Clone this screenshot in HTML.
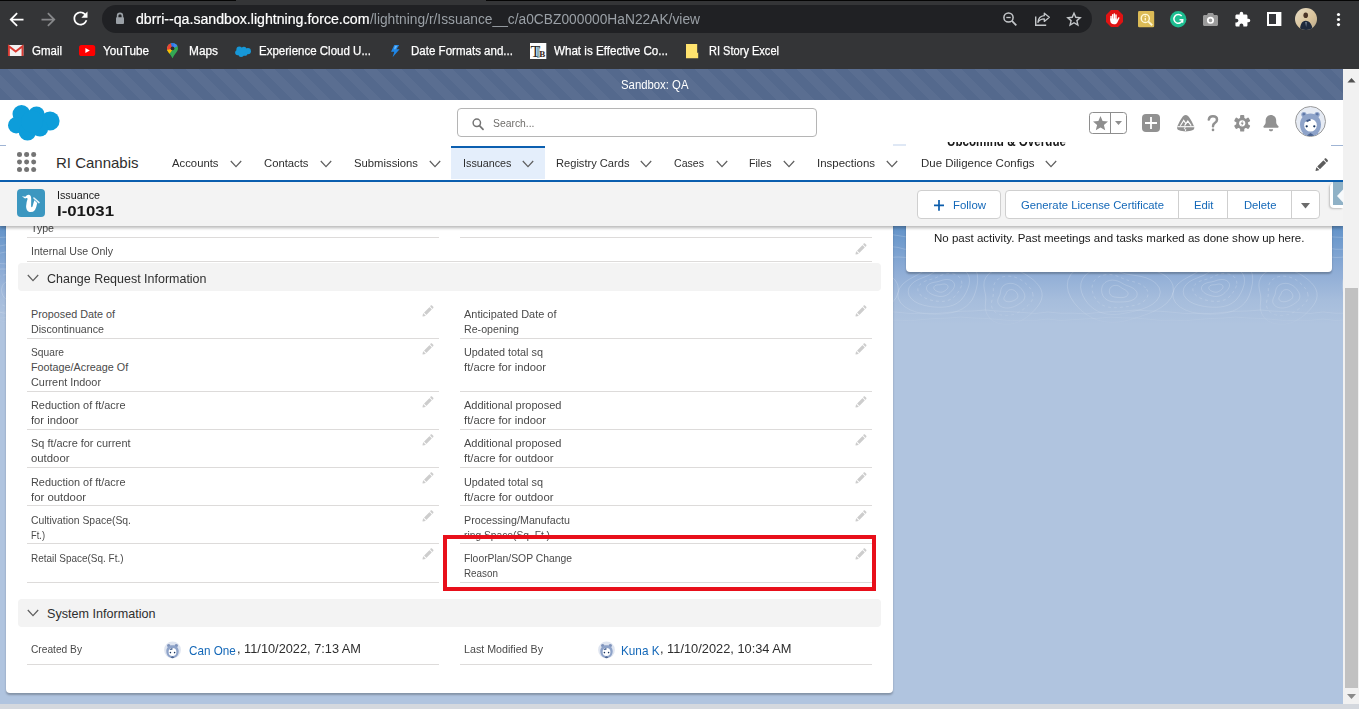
<!DOCTYPE html>
<html lang="en">
<head>
<meta charset="utf-8">
<title>I-01031 | Issuance | Salesforce</title>
<style>
html,body{margin:0;padding:0;}
body{width:1359px;height:709px;overflow:hidden;position:relative;background:#b0c4df;font-family:"Liberation Sans",sans-serif;}
.a{position:absolute;}
.t{position:absolute;white-space:pre;transform-origin:0 50%;font-family:"Liberation Sans",sans-serif;}
svg{position:absolute;overflow:visible;}
/* browser chrome */
#chrome{left:0;top:0;width:1359px;height:69px;background:#343537;}
#tabstrip{left:0;top:0;width:1359px;height:1px;background:#050505;}
#tabgap{left:236px;top:0;width:250px;height:1px;background:#343537;}
#omni{left:102px;top:5px;width:990px;height:28px;border-radius:14px;background:#202124;}
/* page */
#banner{left:0;top:69px;width:1343px;height:31px;background:#54698d;background-image:repeating-linear-gradient(45deg,rgba(255,255,255,0) 0,rgba(255,255,255,0) 9px,rgba(255,255,255,.035) 9px,rgba(255,255,255,.035) 18px);}
#ghead{left:0;top:100px;width:1343px;height:46px;background:#fff;}
#nav{left:0;top:146px;width:1343px;height:34px;background:#fff;}
#navline{left:0;top:180px;width:1343px;height:2px;background:#0b5fb0;}
#tabsel{left:451px;top:146px;width:94px;height:33px;background:#e4eefb;}
#tabtop{left:451px;top:146px;width:94px;height:2px;background:#0b5fb0;}
#search{left:457px;top:108px;width:360px;height:29px;box-sizing:border-box;border:1px solid #b5b5b5;border-radius:4px;background:#fff;}
#bgtop{left:0;top:182px;width:1343px;height:160px;background:linear-gradient(#5f8fc6 0,#6293c9 44px,#8fadd6 90px,#a6bddc 118px,#b0c4df 142px);}
#rechead{left:0;top:182px;width:1343px;height:44px;background:#f3f3f3;box-shadow:0 2px 3px rgba(0,0,0,.28);}
#recicon{left:17px;top:189px;width:28px;height:28px;border-radius:4px;background:#3c97c0;}
#lcard{left:6px;top:200px;width:887px;height:493px;background:#fff;border-radius:0 0 4px 4px;box-shadow:0 2px 2px rgba(0,0,0,.25);}
#rcard{left:906px;top:200px;width:426px;height:72px;background:#fff;border-radius:0 0 4px 4px;box-shadow:0 2px 2px rgba(0,0,0,.25);}
.sec{left:18px;width:863px;height:28px;background:#f3f3f3;border-radius:4px;}
.ln{height:1px;background:#dddbda;}
.btn{box-sizing:border-box;border:1px solid #cfcfcf;background:#fff;border-radius:4px;}
.dv{width:1px;background:#cfcfcf;top:191px;height:27px;}
#redbox{left:443px;top:535px;width:433px;height:56px;box-sizing:border-box;border:4px solid #e80f1a;}
/* scrollbar */
#sbar{left:1343px;top:69px;width:16px;height:635px;background:#f1f1f1;}
#sthumb{left:1345px;top:288px;width:13px;height:400px;background:#c1c1c1;}
#hbar{left:0;top:704px;width:1359px;height:5px;background:#d4d8de;}
#sidetab{left:1330px;top:183px;width:13px;height:25px;background:#fff;border-radius:4px 0 0 4px;box-shadow:-1px 1px 2px rgba(0,0,0,.22);}
#sidetab2{left:1333.300px;top:182px;width:9.700px;height:23.200px;background:#8fb1c6;}
.glitchwrap{left:900px;top:141.500px;width:180px;height:4.300px;overflow:hidden;}
.hide{left:0;top:226px;}
</style>
</head>
<body>
<!-- ===== page background ===== -->
<div class="a" id="bgtop"></div>
<svg class="a" style="left:0;top:226px" width="1343" height="100" viewBox="0 0 1343 100"><defs><pattern id="topo" width="275" height="130" patternUnits="userSpaceOnUse" x="-52" y="0"><path d="M78.8 65.1Q79.8 66.0 80.1 67.2Q80.3 68.4 79.4 69.5Q78.6 70.5 77.1 71.0Q75.6 71.5 74.1 71.6Q72.5 71.6 71.3 71.5Q70.0 71.4 68.8 71.3Q67.7 71.2 66.4 71.0Q65.2 70.7 64.2 70.2Q63.1 69.6 62.4 68.8Q61.8 67.9 61.5 67.0Q61.3 66.0 61.3 65.0Q61.4 64.0 61.8 62.9Q62.2 61.9 63.1 61.0Q64.1 60.1 65.5 59.7Q66.9 59.2 68.5 59.4Q70.0 59.6 71.2 60.2Q72.3 60.9 73.1 61.5Q73.9 62.1 74.7 62.6Q75.6 63.1 76.7 63.6Q77.8 64.2 78.8 65.1ZM87.5 64.2Q89.3 66.0 89.2 68.2Q89.2 70.5 87.3 72.3Q85.3 74.0 82.5 74.8Q79.7 75.7 77.1 75.8Q74.5 76.0 72.3 76.0Q70.0 76.0 67.8 76.0Q65.5 75.9 63.2 75.5Q60.9 75.0 59.0 73.9Q57.1 72.7 55.9 71.2Q54.7 69.6 54.2 67.8Q53.6 66.0 53.6 64.1Q53.6 62.2 54.3 60.2Q55.1 58.2 57.0 56.6Q58.9 55.0 61.7 54.4Q64.5 53.8 67.3 54.4Q70.0 54.9 72.0 56.0Q74.0 57.1 75.6 58.0Q77.2 58.9 79.1 59.6Q81.0 60.2 83.4 61.3Q85.8 62.3 87.5 64.2ZM111.1 61.5Q113.4 66.0 111.3 70.6Q109.3 75.2 104.4 78.3Q99.5 81.4 94.2 83.1Q88.9 84.7 84.1 85.7Q79.4 86.8 74.7 87.6Q70.0 88.5 64.9 88.5Q59.8 88.5 54.9 87.2Q50.1 85.8 46.2 83.1Q42.4 80.5 39.6 77.1Q36.9 73.7 35.0 69.9Q33.1 66.0 32.7 61.6Q32.3 57.2 34.6 52.9Q36.8 48.6 41.9 45.9Q47.0 43.2 53.2 43.0Q59.5 42.7 64.7 44.0Q70.0 45.4 74.0 46.8Q78.1 48.1 82.4 48.7Q86.8 49.4 92.4 50.3Q98.0 51.3 103.4 54.1Q108.8 56.9 111.1 61.5ZM125.0 59.8Q126.7 66.0 123.1 71.8Q119.5 77.6 113.2 81.4Q106.8 85.3 100.5 87.6Q94.2 90.0 88.3 91.8Q82.5 93.7 76.3 95.1Q70.0 96.5 63.2 96.3Q56.4 96.2 50.0 94.2Q43.7 92.1 38.6 88.6Q33.5 85.1 29.5 80.8Q25.5 76.4 22.6 71.2Q19.6 66.0 19.3 60.0Q18.9 54.0 22.7 48.6Q26.4 43.2 33.7 40.3Q41.0 37.3 49.1 37.4Q57.1 37.4 63.6 38.9Q70.0 40.4 75.4 41.2Q80.8 42.0 87.4 42.1Q94.0 42.2 102.0 43.6Q110.0 45.0 116.7 49.3Q123.3 53.5 125.0 59.8ZM175.0 61.2Q174.9 62.0 174.3 62.7Q173.7 63.3 173.1 63.9Q172.5 64.4 171.9 64.8Q171.3 65.2 170.5 65.6Q169.8 66.0 168.9 66.1Q168.0 66.3 167.1 66.2Q166.2 66.1 165.3 65.8Q164.4 65.5 163.6 65.1Q162.8 64.7 162.1 64.1Q161.4 63.5 161.0 62.8Q160.6 62.0 160.9 61.2Q161.1 60.4 161.9 59.8Q162.7 59.3 163.8 59.0Q164.8 58.8 165.7 58.8Q166.5 58.8 167.3 58.7Q168.0 58.5 168.9 58.3Q169.8 58.1 170.9 58.0Q172.0 58.0 173.1 58.4Q174.2 58.8 174.7 59.5Q175.2 60.3 175.0 61.2ZM181.4 60.4Q181.0 62.0 180.0 63.3Q179.0 64.6 178.0 65.6Q177.0 66.7 175.8 67.7Q174.7 68.6 173.2 69.3Q171.6 70.1 169.8 70.3Q168.0 70.6 166.2 70.4Q164.3 70.1 162.6 69.6Q160.8 69.1 159.1 68.4Q157.3 67.6 155.8 66.4Q154.3 65.2 153.7 63.6Q153.1 62.0 153.9 60.4Q154.6 58.9 156.4 57.9Q158.2 56.9 160.1 56.5Q162.1 56.1 163.6 55.9Q165.1 55.6 166.6 55.1Q168.0 54.6 169.9 54.0Q171.8 53.5 174.2 53.5Q176.6 53.5 178.5 54.5Q180.4 55.5 181.1 57.1Q181.9 58.8 181.4 60.4ZM196.1 58.6Q195.2 62.0 193.9 64.9Q192.6 67.8 190.9 70.4Q189.2 73.1 186.5 75.4Q183.9 77.7 180.1 79.2Q176.4 80.6 172.2 81.0Q168.0 81.5 163.7 81.2Q159.4 81.0 154.9 80.2Q150.4 79.4 145.9 77.7Q141.4 75.9 138.4 72.8Q135.3 69.7 135.2 65.8Q135.1 62.0 137.9 58.8Q140.8 55.6 144.8 53.8Q148.8 52.0 152.1 50.8Q155.5 49.6 158.2 47.9Q160.9 46.2 164.4 44.1Q168.0 42.0 173.1 40.8Q178.1 39.5 183.4 40.5Q188.6 41.5 192.0 44.6Q195.4 47.7 196.2 51.4Q196.9 55.2 196.1 58.6ZM204.4 57.7Q203.7 62.0 202.5 65.9Q201.3 69.8 199.2 73.5Q197.0 77.2 193.3 80.2Q189.5 83.3 184.4 85.1Q179.2 86.9 173.6 87.6Q168.0 88.2 162.1 88.2Q156.2 88.2 149.7 87.4Q143.3 86.5 137.2 83.9Q131.1 81.3 127.6 76.8Q124.1 72.3 124.9 67.1Q125.7 62.0 129.9 58.0Q134.2 54.1 139.0 51.7Q143.8 49.3 147.3 47.2Q150.9 45.1 154.3 42.1Q157.7 39.1 162.8 36.0Q168.0 32.8 175.1 31.6Q182.2 30.5 188.9 32.5Q195.7 34.6 199.5 39.0Q203.4 43.5 204.3 48.4Q205.1 53.3 204.4 57.7ZM244.8 69.2Q245.0 70.0 244.8 70.8Q244.7 71.6 244.2 72.3Q243.6 73.0 242.8 73.5Q242.0 74.0 241.1 74.4Q240.2 74.9 239.1 75.2Q238.0 75.6 236.7 75.7Q235.3 75.9 234.0 75.6Q232.7 75.3 231.8 74.5Q231.0 73.7 230.9 72.7Q230.8 71.7 231.3 70.8Q231.8 70.0 232.2 69.4Q232.7 68.8 232.9 68.1Q233.2 67.5 233.5 66.6Q233.8 65.8 234.6 65.0Q235.4 64.2 236.7 63.8Q238.0 63.5 239.4 63.7Q240.7 64.0 241.7 64.7Q242.7 65.4 243.3 66.1Q243.8 66.9 244.2 67.7Q244.6 68.5 244.8 69.2ZM251.6 68.5Q252.1 70.0 251.7 71.6Q251.4 73.1 250.3 74.5Q249.2 75.8 247.6 76.9Q246.1 78.0 244.3 79.0Q242.5 80.0 240.3 80.9Q238.0 81.7 235.2 82.0Q232.5 82.2 229.9 81.4Q227.4 80.5 226.0 78.8Q224.6 77.0 224.7 75.1Q224.8 73.1 225.6 71.5Q226.4 70.0 226.9 68.8Q227.3 67.5 227.5 66.0Q227.6 64.6 228.2 62.8Q228.9 61.0 230.7 59.4Q232.6 57.9 235.3 57.5Q238.0 57.0 240.6 57.7Q243.2 58.4 245.1 59.8Q247.0 61.1 248.2 62.6Q249.4 64.0 250.3 65.5Q251.2 66.9 251.6 68.5ZM268.9 66.5Q269.6 70.0 268.5 73.4Q267.3 76.9 265.0 79.9Q262.7 82.9 259.8 85.9Q257.0 88.8 253.0 91.7Q249.1 94.7 243.6 96.7Q238.0 98.7 231.7 98.4Q225.3 98.1 220.4 95.2Q215.6 92.2 213.8 87.9Q211.9 83.6 212.3 79.8Q212.6 75.9 212.8 73.0Q212.9 70.0 212.1 66.9Q211.2 63.7 210.9 59.7Q210.5 55.6 212.8 51.5Q215.1 47.3 220.3 44.8Q225.5 42.3 231.7 42.3Q238.0 42.3 243.4 44.2Q248.8 46.1 252.9 48.6Q257.0 51.2 260.3 53.9Q263.5 56.6 265.9 59.8Q268.2 62.9 268.9 66.5ZM0 10.0Q12.5 11.5 25.0 11.6Q37.5 15.0 50.0 11.6Q62.5 11.2 75.0 9.3Q87.5 5.6 100.0 8.0Q112.5 6.5 125.0 9.6Q137.5 12.5 150.0 11.8Q162.5 14.8 175.0 11.3Q187.5 10.1 200.0 8.9Q212.5 5.2 225.0 8.1Q237.5 7.3 250.0 10.1Q262.5 13.3 275.0 10.0M0 20.0Q12.5 25.3 25.0 22.4Q37.5 24.1 50.0 20.3Q62.5 16.8 75.0 17.8Q87.5 14.2 100.0 18.5Q112.5 20.1 125.0 21.4Q137.5 25.8 150.0 22.3Q162.5 23.0 175.0 19.8Q187.5 15.8 200.0 17.6Q212.5 14.7 225.0 18.9Q237.5 21.4 250.0 21.8Q262.5 26.0 275.0 20.0M0 29.0Q12.5 33.5 25.0 30.0Q37.5 28.2 50.0 27.6Q62.5 24.0 75.0 27.2Q87.5 27.1 100.0 29.4Q112.5 33.0 125.0 31.0Q137.5 33.0 150.0 29.6Q162.5 27.2 175.0 27.3Q187.5 24.0 200.0 27.5Q212.5 28.2 225.0 29.8Q237.5 33.5 250.0 31.0Q262.5 32.3 275.0 29.0M0 86.0Q12.5 87.9 25.0 87.2Q37.5 88.7 50.0 86.6Q62.5 85.5 75.0 85.2Q87.5 83.0 100.0 84.9Q112.5 84.9 125.0 86.3Q137.5 88.4 150.0 87.2Q162.5 88.4 175.0 86.4Q187.5 84.9 200.0 85.0Q212.5 83.0 225.0 85.1Q237.5 85.5 250.0 86.5Q262.5 88.7 275.0 86.0M0 93.0Q12.5 95.8 25.0 93.7Q37.5 92.8 50.0 92.3Q62.5 90.1 75.0 91.9Q87.5 91.6 100.0 93.1Q112.5 95.2 125.0 94.2Q137.5 95.6 150.0 93.5Q162.5 92.2 175.0 92.1Q187.5 90.0 200.0 92.0Q212.5 92.2 225.0 93.4Q237.5 95.6 250.0 94.2Q262.5 95.2 275.0 93.0" fill="none" stroke="#fff" stroke-opacity=".22" stroke-width=".9"/><path d="M98.4 62.9Q100.6 66.0 99.8 69.4Q99.1 72.8 95.7 75.3Q92.4 77.7 88.3 78.9Q84.1 80.0 80.4 80.5Q76.8 81.0 73.4 81.3Q70.0 81.7 66.5 81.7Q62.9 81.7 59.4 80.9Q55.8 80.0 53.0 78.2Q50.2 76.4 48.4 73.9Q46.5 71.5 45.4 68.7Q44.4 66.0 44.1 62.9Q43.9 59.9 45.2 56.8Q46.5 53.7 49.8 51.5Q53.1 49.3 57.5 48.7Q62.0 48.2 66.0 49.2Q70.0 50.2 72.9 51.6Q75.9 53.0 78.6 53.9Q81.3 54.8 84.9 55.6Q88.4 56.4 92.3 58.1Q96.1 59.9 98.4 62.9ZM188.5 59.5Q187.7 62.0 186.5 64.0Q185.2 66.0 183.9 67.8Q182.5 69.6 180.7 71.2Q178.9 72.8 176.4 73.9Q173.9 75.0 170.9 75.3Q168.0 75.6 165.1 75.3Q162.1 75.1 159.1 74.4Q156.2 73.7 153.2 72.5Q150.2 71.3 147.9 69.3Q145.5 67.3 145.0 64.6Q144.4 62.0 146.1 59.6Q147.7 57.3 150.6 55.8Q153.6 54.4 156.3 53.8Q159.0 53.1 161.2 52.4Q163.3 51.6 165.7 50.4Q168.0 49.2 171.3 48.2Q174.6 47.3 178.4 47.6Q182.2 48.0 184.9 49.8Q187.6 51.7 188.4 54.4Q189.2 57.0 188.5 59.5ZM259.7 67.5Q260.4 70.0 259.7 72.5Q259.0 74.9 257.2 77.0Q255.5 79.1 253.2 81.0Q251.0 82.9 248.2 84.7Q245.5 86.5 241.7 88.0Q238.0 89.4 233.5 89.6Q229.1 89.7 225.3 88.0Q221.5 86.3 219.8 83.4Q218.1 80.4 218.4 77.4Q218.8 74.5 219.5 72.3Q220.3 70.0 220.3 67.9Q220.4 65.9 220.3 63.3Q220.1 60.6 221.4 57.7Q222.6 54.7 225.9 52.6Q229.2 50.5 233.6 50.2Q238.0 49.9 242.0 51.2Q245.9 52.5 248.8 54.4Q251.7 56.4 253.8 58.5Q256.0 60.6 257.5 62.8Q259.1 65.1 259.7 67.5Z" fill="none" stroke="#fff" stroke-opacity=".22" stroke-width=".9" stroke-dasharray="3 3"/></pattern><linearGradient id="tf" x1="0" y1="0" x2="0" y2="1"><stop offset="0" stop-color="#fff" stop-opacity=".9"/><stop offset=".75" stop-color="#fff" stop-opacity=".9"/><stop offset="1" stop-color="#fff" stop-opacity=".1"/></linearGradient><mask id="tm"><rect width="1343" height="100" fill="url(#tf)"/></mask></defs><rect width="1343" height="100" fill="url(#topo)" mask="url(#tm)"/></svg>
<!-- ===== cards ===== -->
<div class="a" id="lcard"></div>
<div class="a" id="rcard"></div>
<!-- section headers -->
<div class="a sec" style="top:263px"></div>
<div class="a sec" style="top:598.500px"></div>
<div class="a ln" style="left:27px;top:237px;width:412px"></div>
<div class="a ln" style="left:460px;top:237px;width:412px"></div>
<div class="a ln" style="left:27px;top:261px;width:412px"></div>
<div class="a ln" style="left:460px;top:261px;width:412px"></div>
<div class="a ln" style="left:27px;top:338px;width:412px"></div>
<div class="a ln" style="left:460px;top:338px;width:412px"></div>
<div class="a ln" style="left:27px;top:391px;width:412px"></div>
<div class="a ln" style="left:460px;top:391px;width:412px"></div>
<div class="a ln" style="left:27px;top:429px;width:412px"></div>
<div class="a ln" style="left:460px;top:429px;width:412px"></div>
<div class="a ln" style="left:27px;top:467px;width:412px"></div>
<div class="a ln" style="left:460px;top:467px;width:412px"></div>
<div class="a ln" style="left:27px;top:505px;width:412px"></div>
<div class="a ln" style="left:460px;top:505px;width:412px"></div>
<div class="a ln" style="left:27px;top:543px;width:412px"></div>
<div class="a ln" style="left:460px;top:543px;width:412px"></div>
<div class="a ln" style="left:27px;top:582px;width:412px"></div>
<div class="a ln" style="left:460px;top:582px;width:412px"></div>
<div class="a ln" style="left:27px;top:664px;width:412px"></div>
<div class="a ln" style="left:460px;top:664px;width:412px"></div>
<div class="a ln" style="left:439px;top:261px;width:21px"></div>
<svg style="left:854.5px;top:243px" width="12" height="12" viewBox="0 0 52 52"><path fill="#cdcdcd" d="M9.5 33.4l8.9 8.9c.4.4 1 .4 1.4 0L42 20c.4-.4.4-1 0-1.400l-8.800-8.800c-.400-.4-1-.4-1.400 0L9.500 32c-.400.400-.400 1 0 1.400zM36.100 5.700c-.400.400-.400 1 0 1.400l8.800 8.800c.4.400 1 .400 1.400 0l2.500-2.500c1.600-1.500 1.600-3.900 0-5.500l-5.700-5.700c-1.600-1.600-4.100-1.600-5.700 0l-1.300 3.500zM2.100 48.200c-.200 1 .7 1.900 1.700 1.700l10.900-2.600c.400-.1.700-.3.900-.5l.200-.2c.2-.2.300-.9-.100-1.300l-9-9c-.400-.4-1.100-.3-1.300-.1l-.200.2c-.3.300-.400.600-.500.900L2.100 48.200z"/></svg>
<svg style="left:422px;top:305.4px" width="12" height="12" viewBox="0 0 52 52"><path fill="#cdcdcd" d="M9.5 33.4l8.9 8.9c.4.4 1 .4 1.4 0L42 20c.4-.4.4-1 0-1.400l-8.800-8.800c-.400-.4-1-.4-1.400 0L9.500 32c-.400.400-.400 1 0 1.400zM36.100 5.700c-.400.400-.400 1 0 1.400l8.800 8.800c.4.400 1 .400 1.400 0l2.500-2.500c1.600-1.500 1.600-3.900 0-5.500l-5.700-5.700c-1.600-1.600-4.100-1.600-5.700 0l-1.300 3.500zM2.100 48.200c-.200 1 .7 1.900 1.700 1.700l10.900-2.600c.400-.1.700-.3.900-.5l.200-.2c.2-.2.300-.9-.100-1.300l-9-9c-.400-.4-1.100-.3-1.300-.1l-.200.2c-.3.300-.400.600-.500.900L2.100 48.200z"/></svg>
<svg style="left:854.5px;top:305.4px" width="12" height="12" viewBox="0 0 52 52"><path fill="#cdcdcd" d="M9.5 33.4l8.9 8.9c.4.4 1 .4 1.4 0L42 20c.4-.4.4-1 0-1.400l-8.800-8.800c-.400-.4-1-.4-1.400 0L9.500 32c-.400.400-.400 1 0 1.400zM36.100 5.700c-.400.400-.400 1 0 1.400l8.800 8.800c.4.400 1 .400 1.400 0l2.500-2.500c1.600-1.500 1.600-3.900 0-5.500l-5.700-5.700c-1.600-1.600-4.100-1.600-5.700 0l-1.300 3.500zM2.100 48.200c-.200 1 .7 1.900 1.700 1.700l10.900-2.600c.400-.1.700-.3.900-.5l.200-.2c.2-.2.300-.9-.100-1.300l-9-9c-.400-.4-1.100-.3-1.300-.1l-.200.2c-.3.300-.400.600-.500.900L2.100 48.200z"/></svg>
<svg style="left:422px;top:343.4px" width="12" height="12" viewBox="0 0 52 52"><path fill="#cdcdcd" d="M9.5 33.4l8.9 8.9c.4.4 1 .4 1.4 0L42 20c.4-.4.4-1 0-1.400l-8.800-8.800c-.400-.4-1-.4-1.400 0L9.500 32c-.400.400-.400 1 0 1.400zM36.100 5.700c-.400.400-.400 1 0 1.400l8.800 8.800c.4.400 1 .400 1.400 0l2.500-2.500c1.600-1.500 1.600-3.900 0-5.500l-5.700-5.700c-1.600-1.600-4.100-1.600-5.700 0l-1.300 3.500zM2.100 48.200c-.200 1 .7 1.900 1.700 1.700l10.900-2.600c.400-.1.700-.3.900-.5l.200-.2c.2-.2.300-.9-.100-1.300l-9-9c-.400-.4-1.100-.3-1.300-.1l-.200.2c-.3.300-.400.600-.500.900L2.100 48.200z"/></svg>
<svg style="left:854.5px;top:343.4px" width="12" height="12" viewBox="0 0 52 52"><path fill="#cdcdcd" d="M9.5 33.4l8.9 8.9c.4.4 1 .4 1.4 0L42 20c.4-.4.4-1 0-1.400l-8.800-8.800c-.400-.4-1-.4-1.400 0L9.500 32c-.400.400-.400 1 0 1.400zM36.100 5.700c-.400.400-.400 1 0 1.400l8.800 8.800c.4.400 1 .400 1.400 0l2.500-2.500c1.600-1.500 1.600-3.900 0-5.500l-5.700-5.700c-1.600-1.600-4.100-1.600-5.700 0l-1.300 3.500zM2.100 48.200c-.200 1 .7 1.900 1.700 1.700l10.900-2.600c.400-.1.700-.3.900-.5l.200-.2c.2-.2.300-.9-.100-1.300l-9-9c-.400-.4-1.100-.3-1.300-.1l-.200.2c-.3.300-.400.600-.500.900L2.100 48.200z"/></svg>
<svg style="left:422px;top:396.4px" width="12" height="12" viewBox="0 0 52 52"><path fill="#cdcdcd" d="M9.5 33.4l8.9 8.9c.4.4 1 .4 1.4 0L42 20c.4-.4.4-1 0-1.400l-8.800-8.800c-.400-.4-1-.4-1.400 0L9.500 32c-.400.400-.400 1 0 1.400zM36.100 5.700c-.400.400-.400 1 0 1.400l8.800 8.800c.4.400 1 .400 1.400 0l2.500-2.500c1.600-1.500 1.600-3.900 0-5.500l-5.700-5.700c-1.600-1.600-4.100-1.600-5.700 0l-1.300 3.500zM2.100 48.200c-.200 1 .7 1.900 1.700 1.700l10.900-2.600c.400-.1.700-.3.900-.5l.200-.2c.2-.2.300-.9-.100-1.300l-9-9c-.400-.4-1.100-.3-1.300-.1l-.200.2c-.3.300-.400.600-.500.900L2.100 48.200z"/></svg>
<svg style="left:854.5px;top:396.4px" width="12" height="12" viewBox="0 0 52 52"><path fill="#cdcdcd" d="M9.5 33.4l8.9 8.9c.4.4 1 .4 1.4 0L42 20c.4-.4.4-1 0-1.400l-8.800-8.800c-.400-.4-1-.4-1.400 0L9.500 32c-.400.400-.400 1 0 1.400zM36.100 5.700c-.400.400-.400 1 0 1.400l8.800 8.800c.4.400 1 .400 1.400 0l2.500-2.500c1.600-1.500 1.600-3.900 0-5.500l-5.700-5.700c-1.600-1.600-4.100-1.600-5.700 0l-1.300 3.500zM2.100 48.200c-.200 1 .7 1.900 1.700 1.700l10.900-2.600c.400-.1.700-.3.900-.5l.200-.2c.2-.2.300-.9-.100-1.300l-9-9c-.400-.4-1.100-.3-1.300-.1l-.200.2c-.3.300-.400.600-.500.900L2.100 48.200z"/></svg>
<svg style="left:422px;top:434.4px" width="12" height="12" viewBox="0 0 52 52"><path fill="#cdcdcd" d="M9.5 33.4l8.9 8.9c.4.4 1 .4 1.4 0L42 20c.4-.4.4-1 0-1.400l-8.800-8.800c-.400-.4-1-.4-1.400 0L9.500 32c-.400.400-.400 1 0 1.400zM36.100 5.700c-.400.400-.400 1 0 1.400l8.800 8.800c.4.400 1 .400 1.400 0l2.500-2.500c1.600-1.500 1.600-3.900 0-5.500l-5.700-5.700c-1.600-1.600-4.100-1.600-5.700 0l-1.300 3.500zM2.100 48.200c-.200 1 .7 1.900 1.700 1.700l10.900-2.600c.400-.1.700-.3.900-.5l.200-.2c.2-.2.300-.9-.100-1.300l-9-9c-.400-.4-1.100-.3-1.300-.1l-.200.2c-.3.300-.400.600-.500.900L2.100 48.200z"/></svg>
<svg style="left:854.5px;top:434.4px" width="12" height="12" viewBox="0 0 52 52"><path fill="#cdcdcd" d="M9.5 33.4l8.9 8.9c.4.4 1 .4 1.4 0L42 20c.4-.4.4-1 0-1.400l-8.800-8.800c-.400-.4-1-.4-1.400 0L9.500 32c-.400.400-.400 1 0 1.400zM36.100 5.700c-.400.400-.400 1 0 1.400l8.800 8.800c.4.400 1 .400 1.400 0l2.500-2.500c1.600-1.500 1.600-3.900 0-5.500l-5.700-5.700c-1.600-1.600-4.100-1.600-5.700 0l-1.300 3.500zM2.100 48.200c-.200 1 .7 1.900 1.700 1.700l10.900-2.600c.400-.1.700-.3.900-.5l.200-.2c.2-.2.300-.9-.100-1.300l-9-9c-.400-.4-1.100-.3-1.300-.1l-.200.2c-.3.300-.400.600-.500.900L2.100 48.200z"/></svg>
<svg style="left:422px;top:472.4px" width="12" height="12" viewBox="0 0 52 52"><path fill="#cdcdcd" d="M9.5 33.4l8.9 8.9c.4.4 1 .4 1.4 0L42 20c.4-.4.4-1 0-1.400l-8.800-8.800c-.400-.4-1-.4-1.400 0L9.500 32c-.400.400-.400 1 0 1.400zM36.100 5.700c-.400.400-.400 1 0 1.400l8.800 8.800c.4.400 1 .400 1.400 0l2.500-2.500c1.600-1.500 1.600-3.900 0-5.500l-5.700-5.700c-1.600-1.600-4.100-1.600-5.700 0l-1.300 3.500zM2.100 48.200c-.200 1 .7 1.900 1.700 1.700l10.900-2.600c.400-.1.700-.3.900-.5l.200-.2c.2-.2.300-.9-.100-1.300l-9-9c-.400-.4-1.100-.3-1.300-.1l-.200.2c-.3.300-.400.600-.500.900L2.100 48.200z"/></svg>
<svg style="left:854.5px;top:472.4px" width="12" height="12" viewBox="0 0 52 52"><path fill="#cdcdcd" d="M9.5 33.4l8.9 8.9c.4.4 1 .4 1.4 0L42 20c.4-.4.4-1 0-1.400l-8.800-8.800c-.400-.4-1-.4-1.400 0L9.500 32c-.400.400-.400 1 0 1.400zM36.100 5.700c-.400.400-.400 1 0 1.400l8.800 8.800c.4.400 1 .400 1.400 0l2.500-2.500c1.600-1.500 1.600-3.900 0-5.500l-5.700-5.700c-1.600-1.600-4.100-1.600-5.700 0l-1.300 3.500zM2.100 48.200c-.200 1 .7 1.900 1.700 1.700l10.900-2.600c.400-.1.700-.3.900-.5l.200-.2c.2-.2.300-.9-.100-1.300l-9-9c-.400-.4-1.100-.3-1.300-.1l-.200.2c-.3.300-.400.600-.500.900L2.100 48.200z"/></svg>
<svg style="left:422px;top:510.4px" width="12" height="12" viewBox="0 0 52 52"><path fill="#cdcdcd" d="M9.5 33.4l8.9 8.9c.4.4 1 .4 1.4 0L42 20c.4-.4.4-1 0-1.400l-8.800-8.800c-.400-.4-1-.4-1.400 0L9.500 32c-.400.400-.400 1 0 1.400zM36.100 5.700c-.400.400-.400 1 0 1.400l8.800 8.800c.4.400 1 .400 1.400 0l2.500-2.500c1.600-1.500 1.600-3.900 0-5.500l-5.700-5.700c-1.600-1.600-4.100-1.600-5.700 0l-1.300 3.500zM2.100 48.200c-.200 1 .7 1.900 1.700 1.700l10.900-2.600c.400-.1.700-.3.900-.5l.200-.2c.2-.2.300-.9-.100-1.300l-9-9c-.400-.4-1.100-.3-1.300-.1l-.200.2c-.3.300-.400.600-.500.900L2.100 48.200z"/></svg>
<svg style="left:854.5px;top:510.4px" width="12" height="12" viewBox="0 0 52 52"><path fill="#cdcdcd" d="M9.5 33.4l8.9 8.9c.4.4 1 .4 1.4 0L42 20c.4-.4.4-1 0-1.400l-8.800-8.800c-.400-.4-1-.4-1.400 0L9.500 32c-.400.400-.400 1 0 1.400zM36.100 5.700c-.400.400-.400 1 0 1.400l8.800 8.800c.4.400 1 .400 1.400 0l2.500-2.500c1.600-1.500 1.600-3.900 0-5.500l-5.700-5.700c-1.600-1.600-4.100-1.600-5.700 0l-1.300 3.500zM2.100 48.200c-.200 1 .7 1.900 1.700 1.700l10.900-2.600c.400-.1.700-.3.900-.5l.200-.2c.2-.2.300-.9-.100-1.300l-9-9c-.400-.4-1.100-.3-1.300-.1l-.200.2c-.3.300-.400.600-.500.900L2.100 48.200z"/></svg>
<svg style="left:422px;top:548.4px" width="12" height="12" viewBox="0 0 52 52"><path fill="#cdcdcd" d="M9.5 33.4l8.9 8.9c.4.4 1 .4 1.4 0L42 20c.4-.4.4-1 0-1.400l-8.800-8.800c-.400-.4-1-.4-1.400 0L9.500 32c-.400.400-.400 1 0 1.400zM36.100 5.700c-.400.400-.400 1 0 1.400l8.800 8.800c.4.400 1 .400 1.400 0l2.500-2.500c1.600-1.500 1.600-3.900 0-5.500l-5.700-5.700c-1.600-1.600-4.100-1.600-5.700 0l-1.300 3.500zM2.100 48.200c-.200 1 .7 1.900 1.700 1.700l10.900-2.600c.400-.1.700-.3.900-.5l.200-.2c.2-.2.300-.9-.100-1.300l-9-9c-.400-.4-1.100-.3-1.300-.1l-.200.2c-.3.300-.400.600-.500.900L2.100 48.200z"/></svg>
<svg style="left:854.5px;top:548.4px" width="12" height="12" viewBox="0 0 52 52"><path fill="#cdcdcd" d="M9.5 33.4l8.9 8.9c.4.4 1 .4 1.4 0L42 20c.4-.4.4-1 0-1.400l-8.800-8.800c-.400-.4-1-.4-1.400 0L9.500 32c-.400.400-.400 1 0 1.400zM36.100 5.700c-.400.400-.400 1 0 1.400l8.800 8.800c.4.400 1 .400 1.400 0l2.500-2.500c1.600-1.500 1.600-3.900 0-5.500l-5.700-5.700c-1.600-1.600-4.100-1.600-5.700 0l-1.300 3.500zM2.100 48.200c-.200 1 .7 1.900 1.700 1.700l10.900-2.600c.400-.1.700-.3.900-.5l.200-.2c.2-.2.300-.9-.100-1.300l-9-9c-.400-.4-1.100-.3-1.300-.1l-.200.2c-.3.300-.400.600-.500.900L2.100 48.200z"/></svg>
<span class="t" style="left:31px;top:220.6px;font-size:10.8px;line-height:14.8px;color:#4a4a4a;transform:scaleX(0.9820);">Type</span>
<!-- ===== banner / header / nav ===== -->
<div class="a" id="banner"></div>
<div class="a" id="ghead"></div>
<div class="a" id="nav"></div>
<div class="a" id="tabsel"></div>
<div class="a" id="tabtop"></div>
<div class="a" style="left:1331px;top:145px;width:12px;height:1px;background:#9fb4d4"></div>
<div class="a" style="left:0;top:145px;width:6px;height:1px;background:#9fb4d4"></div>
<div class="a" id="navline"></div>
<div class="a" id="search"></div>
<div class="a glitchwrap"><span class="t" style="left:47px;top:-9.7px;font-size:14.4px;line-height:18.4px;color:#181818;font-weight:700;transform:scaleX(0.8088);">Upcoming &amp; Overdue</span></div>
<div class="a" style="left:893px;top:144px;width:13px;height:2px;background:#dfe8f5"></div>
<div class="a" id="rechead"></div>
<div class="a" id="recicon"></div>
<!-- buttons -->
<div class="a btn" style="left:917px;top:190px;width:84px;height:29px"></div>
<div class="a btn" style="left:1005px;top:190px;width:315px;height:29px"></div>
<div class="a dv" style="left:1178px"></div>
<div class="a dv" style="left:1227px"></div>
<div class="a dv" style="left:1291px"></div>
<div class="a" id="sidetab"></div>
<div class="a" id="sidetab2"></div>
<!-- ===== browser chrome ===== -->
<div class="a" id="chrome"></div>
<div class="a" id="tabstrip"></div>
<div class="a" id="tabgap"></div>
<div class="a" id="omni"></div>
<!-- ===== scrollbars ===== -->
<div class="a" id="sbar"></div>
<div class="a" id="sthumb"></div>
<div class="a" id="hbar"></div>
<!-- ===== chrome toolbar icons ===== -->
<svg style="left:5.5px;top:8.5px" width="21" height="21" viewBox="0 0 24 24"><path fill="#fff" d="M20 11H7.83l5.59-5.59L12 4l-8 8 8 8 1.41-1.41L7.83 13H20v-2z"/></svg>
<svg style="left:37.5px;top:8.5px" width="21" height="21" viewBox="0 0 24 24"><path fill="#87888a" d="M4 11h12.170l-5.590-5.590L12 4l8 8-8 8-1.410-1.410L16.170 13H4v-2z"/></svg>
<svg style="left:69.500px;top:8.300px" width="21" height="21" viewBox="0 0 24 24"><path fill="#fff" d="M17.650 6.350C16.200 4.900 14.210 4 12 4c-4.420 0-7.990 3.580-7.990 8s3.570 8 7.990 8c3.730 0 6.840-2.550 7.730-6h-2.080c-.820 2.330-3.040 4-5.650 4-3.310 0-6-2.690-6-6s2.690-6 6-6c1.660 0 3.140.690 4.220 1.780L13 11h7V4l-2.350 2.350z"/></svg>
<!-- lock -->
<svg style="left:115px;top:12px" width="10" height="13" viewBox="0 0 10 13"><path fill="none" stroke="#9aa0a6" stroke-width="1.600" d="M2.600 6V3.800a2.400 2.400 0 0 1 4.800 0V6"/><rect x="1" y="5.300" width="8" height="6.700" rx="1" fill="#9aa0a6"/></svg>
<!-- zoom-out magnifier -->
<svg style="left:1002px;top:11px" width="16" height="16" viewBox="0 0 16 16"><circle cx="6.500" cy="6.500" r="4.600" fill="none" stroke="#c4c7ca" stroke-width="1.500"/><path d="M9.900 9.900L14.300 14.300" stroke="#c4c7ca" stroke-width="1.700"/><path d="M4.300 6.500h4.400" stroke="#c4c7ca" stroke-width="1.300"/></svg>
<!-- share -->
<svg style="left:1034px;top:11px" width="17" height="16" viewBox="0 0 17 16"><path fill="none" stroke="#c4c7ca" stroke-width="1.400" d="M1.700 5.500V14.200H12.200"/><path fill="none" stroke="#c4c7ca" stroke-width="1.300" stroke-linejoin="round" d="M10.300 2.200L15.300 6.300L10.300 10.400V7.900C7 7.900 5.200 9.100 3.900 11.300C4.300 7.500 6.400 5 10.300 4.700Z"/></svg>
<!-- star outline -->
<svg style="left:1066px;top:11px" width="16" height="16" viewBox="0 0 16 16"><path fill="none" stroke="#c4c7ca" stroke-width="1.400" stroke-linejoin="miter" d="M8 2.200L9.800 6.300L14.200 6.700L10.900 9.600L11.900 14L8 11.700L4.100 14L5.100 9.600L1.800 6.700L6.200 6.300Z"/></svg>
<!-- adblock octagon with hand -->
<svg style="left:1105.500px;top:10.200px" width="17" height="17" viewBox="0 0 17 17"><path fill="#e01313" d="M5 0H12L17 5V12L12 17H5L0 12V5Z"/><g fill="#fff"><rect x="4.300" y="5.700" width="1.450" height="5" rx=".72"/><rect x="5.950" y="4.100" width="1.450" height="6" rx=".72"/><rect x="7.600" y="3.300" width="1.450" height="6.500" rx=".72"/><rect x="9.250" y="4.300" width="1.450" height="6" rx=".72"/><path d="M4.300 8.600H10.700V10.200L12.200 7.600C12.700 6.800 13.800 7.400 13.400 8.300L11.600 12C11 13.500 9.900 14.300 8.100 14.300C5.700 14.300 4.300 12.900 4.300 10.700Z"/></g></svg>
<!-- yellow info-search -->
<svg style="left:1138px;top:10.700px" width="16.200" height="16.400" viewBox="0 0 16 16"><rect width="16" height="16" rx="1.300" fill="#dcbb56"/><circle cx="7.200" cy="7.200" r="4" fill="none" stroke="#fff8d6" stroke-width="1.400"/><path d="M10.300 10.300L14 14" stroke="#fff8d6" stroke-width="1.800"/><path d="M7.200 6.700V9.300" stroke="#fff8d6" stroke-width="1.300"/><circle cx="7.200" cy="5.200" r=".8" fill="#fff8d6"/></svg>
<!-- grammarly -->
<svg style="left:1170px;top:10.500px" width="16.400" height="16.400" viewBox="0 0 16 16"><circle cx="8" cy="8" r="8" fill="#1dbd90"/><path fill="none" stroke="#fff" stroke-width="1.500" d="M11.400 4.900A4.300 4.300 0 1 0 12.300 8.600H9.300"/><path d="M12.300 8.600V11.400" stroke="#fff" stroke-width="1.400"/></svg>
<!-- camera -->
<svg style="left:1202.500px;top:12.800px" width="15" height="13" viewBox="0 0 15 13"><path fill="#9b9b9b" d="M5 0h5l1 2h2.500c.9 0 1.500.6 1.500 1.500v8c0 .9-.6 1.500-1.500 1.500h-12C.6 13 0 12.400 0 11.500v-8C0 2.600.6 2 1.500 2H4z"/><circle cx="7.500" cy="7.300" r="2.700" fill="none" stroke="#fff" stroke-width="1.700"/></svg>
<!-- puzzle -->
<svg style="left:1233.500px;top:11px" width="17" height="17" viewBox="0 0 24 24"><path fill="#fff" d="M20.500 11H19V7c0-1.100-.9-2-2-2h-4V3.500a2.500 2.500 0 0 0-5 0V5H4c-1.100 0-1.990.9-1.990 2v3.800H3.500c1.490 0 2.700 1.210 2.700 2.700s-1.210 2.700-2.700 2.700H2V20c0 1.100.9 2 2 2h3.800v-1.500c0-1.490 1.210-2.700 2.700-2.700 1.490 0 2.700 1.210 2.700 2.700V22H17c1.100 0 2-.9 2-2v-4h1.500a2.500 2.500 0 0 0 0-5z"/></svg>
<!-- side panel -->
<svg style="left:1267px;top:12px" width="14.400" height="14" viewBox="0 0 14.400 14"><rect width="14.400" height="14" fill="#fff"/><rect x="2" y="2" width="7" height="10" fill="#35363a"/></svg>
<!-- profile avatar -->
<svg style="left:1295px;top:8px" width="22" height="22" viewBox="0 0 22 22"><defs><clipPath id="pc"><circle cx="11" cy="11" r="11"/></clipPath><linearGradient id="pg" x1="0" y1="0" x2="1" y2="1"><stop offset="0" stop-color="#e6dcc6"/><stop offset=".6" stop-color="#d9c39a"/><stop offset="1" stop-color="#b9a98c"/></linearGradient></defs><g clip-path="url(#pc)"><rect width="22" height="22" fill="url(#pg)"/><ellipse cx="10.700" cy="7.300" rx="2.300" ry="2.800" fill="#4a3428"/><path fill="#1f2a3c" d="M5 22c0-5 1.800-9.300 5.700-9.300S17.500 17 17.500 22z"/><path fill="#6c7a8c" d="M10 14l1.200 5 .8-5z"/></g></svg>
<!-- 3 dots -->
<svg style="left:1336px;top:12px" width="5" height="15" viewBox="0 0 5 15"><circle cx="2.500" cy="2.500" r="1.600" fill="#fff"/><circle cx="2.500" cy="7.500" r="1.600" fill="#fff"/><circle cx="2.500" cy="12.600" r="1.600" fill="#fff"/></svg>
<!-- ===== bookmark favicons ===== -->
<!-- gmail -->
<svg style="left:8.400px;top:45.200px" width="15.400" height="11" viewBox="0 0 15.400 11"><rect width="15.400" height="11" rx=".8" fill="#f2f2f2"/><path fill="none" stroke="#d93a32" stroke-width="1.900" d="M.9 11V1.300L7.700 6.600L14.500 1.300V11"/></svg>
<!-- youtube -->
<svg style="left:79px;top:45.400px" width="16.200" height="11" viewBox="0 0 16.200 11"><rect width="16.200" height="11" rx="2.600" fill="#f00"/><path fill="#fff" d="M6.400 2.900L10.800 5.500L6.400 8.100Z"/></svg>
<!-- maps pin -->
<svg style="left:167.400px;top:43px" width="11" height="15.500" viewBox="0 0 11 15.500"><defs><clipPath id="mp"><path d="M5.500 0A5.500 5.500 0 0 1 11 5.500C11 8.600 7.600 10.600 5.500 15.500C3.400 10.600 0 8.600 0 5.500A5.500 5.500 0 0 1 5.500 0Z"/></clipPath></defs><g clip-path="url(#mp)"><rect width="11" height="15.500" fill="#34a853"/><path fill="#fbbc04" d="M0 5.500L5.500 5.500L2 11.500L0 11Z"/><path fill="#fbbc04" d="M0 4L7 5L2.500 10.600L0 9Z"/><path fill="#ea4335" d="M0 0H4.500L5.500 5.500L0 7Z"/><path fill="#4285f4" d="M4 0H11V3L5.500 5.500Z"/><path fill="#1a73e8" d="M3.500 0H7.500L5.500 5.500Z" opacity=".6"/></g><circle cx="5.500" cy="5.400" r="1.900" fill="#2b2c30"/></svg>
<!-- salesforce mini cloud -->
<svg style="left:235px;top:45.600px" width="16" height="11.200" viewBox="0 0 52 36"><g fill="#1798d8"><circle cx="14" cy="11" r="9.500"/><circle cx="29" cy="11" r="8.500"/><circle cx="42" cy="16.500" r="9.800"/><circle cx="9" cy="21" r="8.500"/><circle cx="20" cy="26.500" r="9"/><circle cx="32" cy="23" r="8.500"/><circle cx="25" cy="17" r="10"/></g></svg>
<!-- lightning bolt -->
<svg style="left:390.500px;top:44.500px" width="8.600" height="12.200" viewBox="0 0 8.600 12.200"><path fill="#1f86e6" d="M3.300 0H8.200L5.600 4.300H8.600L1.600 12.200L3.300 6.700H0Z"/><path fill="#7cc4ff" d="M3.900.7H6.400L4.200 4.300H3Z" opacity=".8"/></svg>
<!-- TB icon -->
<svg style="left:530px;top:43px" width="16.300" height="16" viewBox="0 0 16.300 16"><rect width="16.300" height="16" fill="#fdfdfd"/><rect x="7" y="3" width="2.600" height="12" fill="#8fb0bd"/></svg>
<span class="t" style="left:530.500px;top:43.500px;font-size:16px;line-height:16px;color:#2a2a2a;font-family:'Liberation Serif',serif">T</span>
<span class="t" style="left:539.200px;top:49.500px;font-size:9px;line-height:9px;font-weight:700;color:#3b2a1c;font-family:'Liberation Serif',serif">B</span>
<!-- folder -->
<svg style="left:686px;top:44px" width="12.200" height="14.200" viewBox="0 0 12.200 14.200"><path fill="#ffe36e" d="M0 0H11.200V9.200L12.200 8.200V14.200H0Z"/></svg>
<!-- ===== salesforce header ===== -->
<!-- logo cloud -->
<svg style="left:7.600px;top:105px" width="51.600" height="35.600" viewBox="0 0 51.600 35.600"><g fill="#0d9dda"><circle cx="13.500" cy="9" r="9"/><circle cx="28.500" cy="9.600" r="8.200"/><circle cx="42" cy="16" r="9.600"/><circle cx="8.200" cy="20.300" r="8.200"/><circle cx="19.500" cy="26.800" r="8.800"/><circle cx="32" cy="23.400" r="8.200"/><circle cx="24" cy="16.500" r="11"/></g></svg>
<!-- search glass -->
<svg style="left:472.300px;top:118.200px" width="11.800" height="12.200" viewBox="0 0 13 13.500"><circle cx="5.300" cy="5.300" r="4.100" fill="none" stroke="#747474" stroke-width="1.600"/><path d="M8.200 8.500L12.200 12.700" stroke="#747474" stroke-width="1.900" stroke-linecap="round"/></svg>
<!-- favorites star + dropdown -->
<div class="a" style="left:1089px;top:112px;width:38px;height:22px;box-sizing:border-box;border:1px solid #8e8e8e;border-radius:3.500px;background:#fff"></div>
<div class="a" style="left:1110px;top:112px;width:1px;height:22px;background:#8e8e8e"></div>
<svg style="left:1092.500px;top:115.500px" width="15" height="14.500" viewBox="0 0 15 14.500"><path fill="#8e8e8e" d="M7.500 0L9.600 4.900L15 5.400L10.900 8.900L12.200 14.200L7.500 11.400L2.800 14.200L4.100 8.900L0 5.400L5.400 4.900Z"/></svg>
<svg style="left:1115px;top:121px" width="7" height="4" viewBox="0 0 7 4"><path fill="#8e8e8e" d="M0 0H7L3.500 4Z"/></svg>
<!-- global create (+) -->
<svg style="left:1142px;top:113.800px" width="18" height="18" viewBox="0 0 18 18"><rect width="18" height="18" rx="4" fill="#919191"/><path d="M9 3V15M3 9H15" stroke="#fff" stroke-width="1.800"/></svg>
<!-- trailhead -->
<svg style="left:1176.500px;top:114.800px" width="17.400" height="16.400" viewBox="0 0 17.400 16.400"><path fill="#919191" d="M8.700 0C10.300 0 11.300 1 12.300 2.500C14 5 16 8.700 17 11.300C17.700 13.200 17.300 14.700 15.300 15.300C13.500 15.900 11.200 16.400 8.700 16.400S3.900 15.900 2.100 15.300C.1 14.700-.3 13.200.4 11.300C1.400 8.700 3.400 5 5.100 2.500C6.100 1 7.100 0 8.700 0Z"/><path fill="none" stroke="#fff" stroke-width="1.150" stroke-linejoin="miter" d="M3.300 10.700L6.700 5.400L8.600 8.300M7.600 10.700L10.800 6.100L14.200 10.700"/><path d="M.4 11.700H17" stroke="#fff" stroke-width="1.100"/><path d="M8.400 11.800L7.300 13.700L8.900 14.500L8.300 16.200" stroke="#fff" stroke-width=".9" fill="none"/></svg>
<!-- help ? -->
<svg style="left:1207px;top:114.600px" width="12" height="17" viewBox="0 0 12 17"><path fill="none" stroke="#919191" stroke-width="2.500" stroke-linecap="round" d="M1.800 4.600C2.100 2.500 3.700 1.300 5.900 1.300C8.300 1.300 10 2.700 10 4.700C10 6.300 9.100 7.100 7.800 8C6.500 8.900 6 9.600 6 11.200"/><circle cx="6" cy="14.900" r="1.300" fill="#919191"/></svg>
<!-- setup gear -->
<svg style="left:1234px;top:114.500px" width="16.400" height="16.600" viewBox="-8.200 -8.300 16.400 16.600"><g fill="#919191"><circle r="5.900"/><g id="tooth"><rect x="-2.100" y="-8.300" width="4.200" height="4" rx=".9"/></g><use href="#tooth" transform="rotate(60)"/><use href="#tooth" transform="rotate(120)"/><use href="#tooth" transform="rotate(180)"/><use href="#tooth" transform="rotate(240)"/><use href="#tooth" transform="rotate(300)"/></g><circle r="3.100" fill="#fff"/><path fill="#919191" d="M.5-2.600L-1.600.4H-.2L-.6 2.600L1.600-.5H.2Z"/></svg>
<!-- bell -->
<svg style="left:1261.800px;top:113.800px" width="18" height="18" viewBox="0 0 52 52"><path fill="#919191" d="M46 33.600c-3.400-2.400-5-6.300-5-10.200v-5.400c0-8.600-7.500-15.500-16.400-14.900-8 .5-14 7.500-14 15.500v4.800c0 3.900-1.600 7.800-5 10.200-1 .7-1.600 1.800-1.600 3 0 1.800 1.600 3.400 3.500 3.400h37c1.900 0 3.500-1.600 3.500-3.400 0-1.200-.6-2.300-1.600-3zM30.900 44h-9.800c-.6 0-1.100.6-1 1.200.5 2.800 3 4.800 5.900 4.800s5.400-2.100 5.900-4.800c.1-.6-.4-1.200-1-1.200z"/></svg>
<!-- astro avatar -->
<svg style="left:1295px;top:106px" width="31" height="31" viewBox="0 0 31 31"><defs><clipPath id="av"><circle cx="15.500" cy="15.500" r="14.600"/></clipPath></defs><circle cx="15.500" cy="15.500" r="15" fill="#e6ebf4" stroke="#9a9a9a" stroke-width="1"/><g clip-path="url(#av)"><circle cx="8.900" cy="8.600" r="2.600" fill="#8ea3c9"/><circle cx="22.100" cy="8.600" r="2.600" fill="#8ea3c9"/><circle cx="8.900" cy="8.300" r="1.300" fill="#5f78a8"/><circle cx="22.100" cy="8.300" r="1.300" fill="#5f78a8"/><path fill="#8ea3c9" d="M5 18.500C5 12 9.500 7.500 15.500 7.500S26 12 26 18.500C26 22.500 24.500 25 23 27V31H8V27C6.500 25 5 22.500 5 18.500Z"/><circle cx="15.500" cy="19.300" r="6.300" fill="#fff"/><path fill="#3f5a8a" d="M10.200 15.800C11.500 13.300 14 12.600 15.800 13.100C15.200 13.900 15.300 14.600 15.900 15C14.500 14.700 13.300 15.300 12.800 16.200C12.400 15.600 11.200 15.300 10.200 15.800Z"/><circle cx="11.700" cy="20.300" r="1.150" fill="#16325c"/><circle cx="19.300" cy="20.300" r="1.150" fill="#16325c"/><path fill="#4a6390" d="M11.800 29.500L15.500 27L19.200 29.500V31H11.800Z"/></g></svg>
<!-- app launcher -->
<svg style="left:16.900px;top:152px" width="19.400" height="20" viewBox="0 0 19.400 20"><g fill="#747474"><circle cx="2.500" cy="2.500" r="2.500"/><circle cx="9.600" cy="2.500" r="2.500"/><circle cx="16.700" cy="2.500" r="2.500"/><circle cx="2.500" cy="10" r="2.500"/><circle cx="9.600" cy="10" r="2.500"/><circle cx="16.700" cy="10" r="2.500"/><circle cx="2.500" cy="17.400" r="2.500"/><circle cx="9.600" cy="17.400" r="2.500"/><circle cx="16.700" cy="17.400" r="2.500"/></g></svg>
<svg style="left:229.5px;top:160.100px" width="12" height="8" viewBox="0 0 12 8"><path fill="none" stroke="#5f5f5f" stroke-width="1.250" d="M.8 1L6 6.600L11.200 1"/></svg>
<svg style="left:319.5px;top:160.100px" width="12" height="8" viewBox="0 0 12 8"><path fill="none" stroke="#5f5f5f" stroke-width="1.250" d="M.8 1L6 6.600L11.200 1"/></svg>
<svg style="left:428.5px;top:160.100px" width="12" height="8" viewBox="0 0 12 8"><path fill="none" stroke="#5f5f5f" stroke-width="1.250" d="M.8 1L6 6.600L11.200 1"/></svg>
<svg style="left:522px;top:160.100px" width="12" height="8" viewBox="0 0 12 8"><path fill="none" stroke="#5f5f5f" stroke-width="1.250" d="M.8 1L6 6.600L11.200 1"/></svg>
<svg style="left:640px;top:160.100px" width="12" height="8" viewBox="0 0 12 8"><path fill="none" stroke="#5f5f5f" stroke-width="1.250" d="M.8 1L6 6.600L11.200 1"/></svg>
<svg style="left:715.5px;top:160.100px" width="12" height="8" viewBox="0 0 12 8"><path fill="none" stroke="#5f5f5f" stroke-width="1.250" d="M.8 1L6 6.600L11.200 1"/></svg>
<svg style="left:783px;top:160.100px" width="12" height="8" viewBox="0 0 12 8"><path fill="none" stroke="#5f5f5f" stroke-width="1.250" d="M.8 1L6 6.600L11.200 1"/></svg>
<svg style="left:885.5px;top:160.100px" width="12" height="8" viewBox="0 0 12 8"><path fill="none" stroke="#5f5f5f" stroke-width="1.250" d="M.8 1L6 6.600L11.200 1"/></svg>
<svg style="left:1045px;top:160.100px" width="12" height="8" viewBox="0 0 12 8"><path fill="none" stroke="#5f5f5f" stroke-width="1.250" d="M.8 1L6 6.600L11.200 1"/></svg>
<!-- nav edit pencil -->
<svg style="left:1315px;top:157.5px" width="13.5" height="13.5" viewBox="0 0 52 52"><path fill="#5c5c5c" d="M9.5 33.4l8.9 8.9c.4.4 1 .4 1.4 0L42 20c.4-.4.4-1 0-1.400l-8.800-8.800c-.400-.4-1-.4-1.400 0L9.500 32c-.400.400-.400 1 0 1.400zM36.100 5.700c-.400.400-.400 1 0 1.400l8.800 8.800c.4.400 1 .400 1.400 0l2.500-2.500c1.600-1.500 1.600-3.900 0-5.500l-5.700-5.700c-1.600-1.600-4.100-1.600-5.700 0l-1.300 3.500zM2.100 48.200c-.200 1 .7 1.900 1.700 1.700l10.900-2.600c.400-.1.700-.3.900-.5l.200-.2c.2-.2.300-.9-.100-1.300l-9-9c-.400-.4-1.100-.3-1.300-.1l-.200.2c-.3.300-.400.600-.500.900L2.100 48.200z"/></svg>
<!-- record icon glyph (saxophone) -->
<svg style="left:17px;top:189px" width="28" height="28" viewBox="0 0 28 28"><path fill="#fff" d="M4.900 7.200L8.400 7.700Q9.900 5.400 12 5.700Q14.300 6.300 14.200 10L14.100 17.300Q14.500 19 15.500 17.600L17.300 11.300L20.200 14Q19.400 18.600 18 20.900Q15.800 23.600 12.500 23Q9 22 9.100 17.300Q9.300 13 10.500 10.200Q10.800 8.900 9.500 9L8 9.400Z"/><path stroke="#e8f4fb" stroke-width="1.500" stroke-linecap="round" d="M16.900 9L22 13.600"/></svg>
<!-- follow plus -->
<svg style="left:934px;top:200.200px" width="10" height="10.800" viewBox="0 0 10 10.800"><path d="M5 0V10.800M0 5.400H10" stroke="#0b5cab" stroke-width="1.700"/></svg>
<!-- action menu caret -->
<svg style="left:1300.500px;top:202.600px" width="9" height="5.600" viewBox="0 0 9 5.600"><path fill="#6b6b6b" d="M0 0H9L4.500 5.600Z"/></svg>
<!-- section chevrons -->
<svg style="left:27.300px;top:274px" width="12" height="8" viewBox="0 0 12 8"><path fill="none" stroke="#5f5f5f" stroke-width="1.250" d="M.8 1L6 6.600L11.200 1"/></svg>
<svg style="left:27.300px;top:609.300px" width="12" height="8" viewBox="0 0 12 8"><path fill="none" stroke="#5f5f5f" stroke-width="1.250" d="M.8 1L6 6.600L11.200 1"/></svg>
<!-- side tab arrow -->
<svg style="left:1336.500px;top:189px" width="6.500" height="14" viewBox="0 0 6.500 14"><path fill="#fff" fill-opacity=".92" d="M6.500 0V14L0 7Z"/></svg>
<!-- scrollbar arrows -->
<svg style="left:1346.500px;top:77.500px" width="9" height="4.500" viewBox="0 0 9 5"><path fill="#505050" d="M4.500 0L9 5H0Z"/></svg>
<svg style="left:1346.500px;top:693.500px" width="9" height="5" viewBox="0 0 9 5"><path fill="#8a8a8a" d="M0 0H9L4.500 5Z"/></svg>
<svg style="left:164.3px;top:641px" width="17" height="18" viewBox="0 0 17 18"><circle cx="8.500" cy="9" r="8.400" fill="#dfe5f0"/><circle cx="4.700" cy="4.600" r="1.700" fill="#7f93bb"/><circle cx="12.300" cy="4.600" r="1.700" fill="#7f93bb"/><path fill="#8ea3c9" d="M2.300 10.300C2.300 6.600 5 4.300 8.500 4.300S14.700 6.600 14.700 10.300C14.700 13 13.500 14.600 12.600 15.600C11.500 16.900 5.500 16.900 4.400 15.600C3.500 14.600 2.300 13 2.300 10.300Z"/><circle cx="8.500" cy="11" r="3.900" fill="#fff"/><path fill="#3f5a8a" d="M5.300 8.900C6.200 7.400 7.700 7 8.700 7.300C8.300 7.800 8.400 8.200 8.800 8.500C7.900 8.300 7.200 8.700 6.900 9.200C6.600 8.800 5.900 8.600 5.300 8.900Z"/><circle cx="6.400" cy="11.600" r=".8" fill="#16325c"/><circle cx="10.600" cy="11.600" r=".8" fill="#16325c"/><path fill="#4a6390" d="M6.300 16.400L8.500 15.300L10.700 16.400L8.500 17.300Z"/></svg><svg style="left:597.5px;top:641px" width="17" height="18" viewBox="0 0 17 18"><circle cx="8.500" cy="9" r="8.400" fill="#dfe5f0"/><circle cx="4.700" cy="4.600" r="1.700" fill="#7f93bb"/><circle cx="12.300" cy="4.600" r="1.700" fill="#7f93bb"/><path fill="#8ea3c9" d="M2.300 10.300C2.300 6.600 5 4.300 8.500 4.300S14.700 6.600 14.700 10.300C14.700 13 13.500 14.600 12.600 15.600C11.500 16.900 5.500 16.900 4.400 15.600C3.500 14.600 2.300 13 2.300 10.300Z"/><circle cx="8.500" cy="11" r="3.900" fill="#fff"/><path fill="#3f5a8a" d="M5.300 8.900C6.200 7.400 7.700 7 8.700 7.300C8.300 7.800 8.400 8.200 8.800 8.500C7.900 8.300 7.200 8.700 6.900 9.200C6.600 8.800 5.900 8.600 5.300 8.900Z"/><circle cx="6.400" cy="11.600" r=".8" fill="#16325c"/><circle cx="10.600" cy="11.600" r=".8" fill="#16325c"/><path fill="#4a6390" d="M6.300 16.400L8.500 15.300L10.700 16.400L8.500 17.300Z"/></svg>

<!-- ===== text ===== -->
<div aria-label="Browser toolbar">
<span class="t" style="left:136px;top:10.0px;font-size:14px;line-height:18px;color:#ffffff;transform:scaleX(1.0103);-webkit-text-stroke:.2px #fff;">dbrri--qa.sandbox.lightning.force.com</span>
<span class="t" style="left:369.5px;top:10.0px;font-size:14px;line-height:18px;color:#9aa0a6;transform:scaleX(0.9838);">/lightning/r/Issuance__c/a0CBZ000000HaN22AK/view</span>
<span class="t" style="left:32px;top:43.0px;font-size:12px;line-height:16px;color:#ffffff;transform:scaleX(0.9571);-webkit-text-stroke:.25px #fff;">Gmail</span>
<span class="t" style="left:103px;top:43.0px;font-size:12px;line-height:16px;color:#ffffff;transform:scaleX(0.9755);-webkit-text-stroke:.25px #fff;">YouTube</span>
<span class="t" style="left:189px;top:43.0px;font-size:12px;line-height:16px;color:#ffffff;transform:scaleX(0.9883);-webkit-text-stroke:.25px #fff;">Maps</span>
<span class="t" style="left:259px;top:43.0px;font-size:12px;line-height:16px;color:#ffffff;transform:scaleX(0.9594);-webkit-text-stroke:.25px #fff;">Experience Cloud U...</span>
<span class="t" style="left:411px;top:43.0px;font-size:12px;line-height:16px;color:#ffffff;transform:scaleX(0.9618);-webkit-text-stroke:.25px #fff;">Date Formats and...</span>
<span class="t" style="left:554px;top:43.0px;font-size:12px;line-height:16px;color:#ffffff;transform:scaleX(0.9675);-webkit-text-stroke:.25px #fff;">What is Effective Co...</span>
<span class="t" style="left:708.5px;top:43.0px;font-size:12px;line-height:16px;color:#ffffff;transform:scaleX(0.9207);-webkit-text-stroke:.25px #fff;">RI Story Excel</span>
</div>
<div aria-label="Sandbox banner">
<span class="t" style="left:621px;top:77.1px;font-size:12.3px;line-height:16.3px;color:#ffffff;transform:scaleX(0.9227);">Sandbox: QA</span>
</div>
<header aria-label="Global header">
<span class="t" style="left:492.5px;top:115.2px;font-size:11.7px;line-height:15.7px;color:#706e6b;transform:scaleX(0.8871);">Search...</span>
</header>
<nav aria-label="App navigation">
<span class="t" style="left:56px;top:153.0px;font-size:15px;line-height:19px;color:#2e2e2e;">RI Cannabis</span>
<span class="t" style="left:171.5px;top:154.7px;font-size:11.7px;line-height:15.7px;color:#2e2e2e;transform:scaleX(0.9672);">Accounts</span>
<span class="t" style="left:263.5px;top:154.7px;font-size:11.7px;line-height:15.7px;color:#2e2e2e;transform:scaleX(0.9648);">Contacts</span>
<span class="t" style="left:353.5px;top:154.7px;font-size:11.7px;line-height:15.7px;color:#2e2e2e;transform:scaleX(0.9658);">Submissions</span>
<span class="t" style="left:462.5px;top:154.7px;font-size:11.7px;line-height:15.7px;color:#2e2e2e;transform:scaleX(0.9216);">Issuances</span>
<span class="t" style="left:556px;top:154.7px;font-size:11.7px;line-height:15.7px;color:#2e2e2e;transform:scaleX(0.9509);">Registry Cards</span>
<span class="t" style="left:674px;top:154.7px;font-size:11.7px;line-height:15.7px;color:#2e2e2e;transform:scaleX(0.9052);">Cases</span>
<span class="t" style="left:748.5px;top:154.7px;font-size:11.7px;line-height:15.7px;color:#2e2e2e;transform:scaleX(0.9114);">Files</span>
<span class="t" style="left:816.5px;top:154.7px;font-size:11.7px;line-height:15.7px;color:#2e2e2e;transform:scaleX(0.9810);">Inspections</span>
<span class="t" style="left:920.5px;top:154.7px;font-size:11.7px;line-height:15.7px;color:#2e2e2e;transform:scaleX(0.9815);">Due Diligence Configs</span>
</nav>
<section aria-label="Record header">
<span class="t" style="left:57px;top:187.2px;font-size:11.7px;line-height:15.7px;color:#181818;transform:scaleX(0.9192);">Issuance</span>
<span class="t" style="left:57px;top:200.8px;font-size:15px;line-height:19px;color:#181818;font-weight:700;transform:scaleX(1.1204);">I-01031</span>
<span class="t" style="left:953px;top:196.7px;font-size:11.7px;line-height:15.7px;color:#1468b8;transform:scaleX(0.9769);">Follow</span>
<span class="t" style="left:1020.5px;top:196.7px;font-size:11.7px;line-height:15.7px;color:#1468b8;transform:scaleX(0.9654);">Generate License Certificate</span>
<span class="t" style="left:1193.5px;top:196.7px;font-size:11.7px;line-height:15.7px;color:#1468b8;transform:scaleX(0.9682);">Edit</span>
<span class="t" style="left:1243.5px;top:196.7px;font-size:11.7px;line-height:15.7px;color:#1468b8;transform:scaleX(0.9616);">Delete</span>
</section>
<aside aria-label="Activity">
<span class="t" style="left:933.5px;top:230.2px;font-size:11.7px;line-height:15.7px;color:#181818;transform:scaleX(0.9855);">No past activity. Past meetings and tasks marked as done show up here.</span>
</aside>
<main aria-label="Record details">
<span class="t" style="left:31px;top:243.6px;font-size:10.8px;line-height:14.8px;color:#4a4a4a;transform:scaleX(0.9830);">Internal Use Only</span>
<span class="t" style="left:47px;top:270.9px;font-size:12.6px;line-height:16.6px;color:#2e2e2e;transform:scaleX(0.9905);">Change Request Information</span>
<span class="t" style="left:47px;top:606.0px;font-size:12.6px;line-height:16.6px;color:#2e2e2e;">System Information</span>
<span class="t" style="left:31px;top:306.6px;font-size:10.8px;line-height:14.8px;color:#4a4a4a;">Proposed Date of</span>
<span class="t" style="left:31px;top:321.6px;font-size:10.8px;line-height:14.8px;color:#4a4a4a;transform:scaleX(0.9888);">Discontinuance</span>
<span class="t" style="left:464px;top:306.6px;font-size:10.8px;line-height:14.8px;color:#4a4a4a;transform:scaleX(1.0139);">Anticipated Date of</span>
<span class="t" style="left:464px;top:321.6px;font-size:10.8px;line-height:14.8px;color:#4a4a4a;transform:scaleX(0.9852);">Re-opening</span>
<span class="t" style="left:31px;top:344.6px;font-size:10.8px;line-height:14.8px;color:#4a4a4a;transform:scaleX(0.9475);">Square</span>
<span class="t" style="left:31px;top:359.6px;font-size:10.8px;line-height:14.8px;color:#4a4a4a;">Footage/Acreage Of</span>
<span class="t" style="left:31px;top:374.6px;font-size:10.8px;line-height:14.8px;color:#4a4a4a;transform:scaleX(1.0054);">Current Indoor</span>
<span class="t" style="left:464px;top:344.6px;font-size:10.8px;line-height:14.8px;color:#4a4a4a;transform:scaleX(1.0046);">Updated total sq</span>
<span class="t" style="left:464px;top:359.6px;font-size:10.8px;line-height:14.8px;color:#4a4a4a;transform:scaleX(1.0429);">ft/acre for indoor</span>
<span class="t" style="left:31px;top:397.6px;font-size:10.8px;line-height:14.8px;color:#4a4a4a;transform:scaleX(1.0093);">Reduction of ft/acre</span>
<span class="t" style="left:31px;top:412.6px;font-size:10.8px;line-height:14.8px;color:#4a4a4a;transform:scaleX(1.0411);">for indoor</span>
<span class="t" style="left:464px;top:397.6px;font-size:10.8px;line-height:14.8px;color:#4a4a4a;transform:scaleX(1.0214);">Additional proposed</span>
<span class="t" style="left:464px;top:412.6px;font-size:10.8px;line-height:14.8px;color:#4a4a4a;transform:scaleX(1.0429);">ft/acre for indoor</span>
<span class="t" style="left:31px;top:435.6px;font-size:10.8px;line-height:14.8px;color:#4a4a4a;transform:scaleX(1.0110);">Sq ft/acre for current</span>
<span class="t" style="left:31px;top:450.6px;font-size:10.8px;line-height:14.8px;color:#4a4a4a;transform:scaleX(1.0512);">outdoor</span>
<span class="t" style="left:464px;top:435.6px;font-size:10.8px;line-height:14.8px;color:#4a4a4a;transform:scaleX(1.0214);">Additional proposed</span>
<span class="t" style="left:464px;top:450.6px;font-size:10.8px;line-height:14.8px;color:#4a4a4a;transform:scaleX(1.0500);">ft/acre for outdoor</span>
<span class="t" style="left:31px;top:474.6px;font-size:10.8px;line-height:14.8px;color:#4a4a4a;transform:scaleX(1.0093);">Reduction of ft/acre</span>
<span class="t" style="left:31px;top:489.6px;font-size:10.8px;line-height:14.8px;color:#4a4a4a;transform:scaleX(1.0533);">for outdoor</span>
<span class="t" style="left:464px;top:474.6px;font-size:10.8px;line-height:14.8px;color:#4a4a4a;transform:scaleX(1.0046);">Updated total sq</span>
<span class="t" style="left:464px;top:489.6px;font-size:10.8px;line-height:14.8px;color:#4a4a4a;transform:scaleX(1.0500);">ft/acre for outdoor</span>
<span class="t" style="left:31px;top:512.6px;font-size:10.8px;line-height:14.8px;color:#4a4a4a;transform:scaleX(0.9631);">Cultivation Space(Sq.</span>
<span class="t" style="left:31px;top:527.6px;font-size:10.8px;line-height:14.8px;color:#4a4a4a;transform:scaleX(0.8640);">Ft.)</span>
<span class="t" style="left:464px;top:512.6px;font-size:10.8px;line-height:14.8px;color:#4a4a4a;transform:scaleX(0.9922);">Processing/Manufactu</span>
<span class="t" style="left:464px;top:527.6px;font-size:10.8px;line-height:14.8px;color:#4a4a4a;transform:scaleX(0.9491);">ring Space(Sq. Ft.)</span>
<span class="t" style="left:31px;top:550.6px;font-size:10.8px;line-height:14.8px;color:#4a4a4a;transform:scaleX(0.9230);">Retail Space(Sq. Ft.)</span>
<span class="t" style="left:464px;top:550.6px;font-size:10.8px;line-height:14.8px;color:#4a4a4a;transform:scaleX(0.9588);">FloorPlan/SOP Change</span>
<span class="t" style="left:464px;top:565.6px;font-size:10.8px;line-height:14.8px;color:#4a4a4a;transform:scaleX(0.9135);">Reason</span>
<span class="t" style="left:31px;top:641.6px;font-size:10.8px;line-height:14.8px;color:#4a4a4a;transform:scaleX(0.9442);">Created By</span>
<span class="t" style="left:464px;top:641.6px;font-size:10.8px;line-height:14.8px;color:#4a4a4a;transform:scaleX(0.9896);">Last Modified By</span>
<span class="t" style="left:188.5px;top:643.0px;font-size:12.4px;line-height:16.4px;color:#1468b8;transform:scaleX(0.9417);">Can One</span>
<span class="t" style="left:236.5px;top:640.8px;font-size:12.4px;line-height:16.4px;color:#2e2e2e;transform:scaleX(1.0305);">, 11/10/2022, 7:13 AM</span>
<span class="t" style="left:621px;top:643.0px;font-size:12.4px;line-height:16.4px;color:#1468b8;transform:scaleX(0.9470);">Kuna K</span>
<span class="t" style="left:659.5px;top:640.8px;font-size:12.4px;line-height:16.4px;color:#2e2e2e;transform:scaleX(1.0337);">, 11/10/2022, 10:34 AM</span>
</main>
<div class="a" id="redbox"></div>
</body>
</html>
